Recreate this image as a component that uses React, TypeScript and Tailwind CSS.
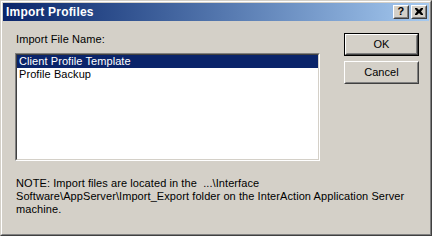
import React from "react";

const face = "bg-[#d4d0c8]";

function RaisedButton({
  children,
  isDefault,
}: {
  children: React.ReactNode;
  isDefault?: boolean;
}) {
  const inner = (
    <div className="flex-1 flex border border-t-white border-l-white border-r-[#404040] border-b-[#404040]">
      <div className="flex-1 flex items-center justify-center border border-t-[#d4d0c8] border-l-[#d4d0c8] border-r-[#808080] border-b-[#808080]">
        {children}
      </div>
    </div>
  );
  if (isDefault) {
    return <div className="w-[75px] h-[23px] flex border border-black">{inner}</div>;
  }
  return <div className="w-[75px] h-[23px] flex">{inner}</div>;
}

function CaptionButton({ children }: { children: React.ReactNode }) {
  return (
    <div className="w-[16px] h-[14px] flex border border-t-white border-l-white border-r-[#404040] border-b-[#404040] bg-[#d4d0c8]">
      <div className="flex-1 flex items-center justify-center border border-t-[#d4d0c8] border-l-[#d4d0c8] border-r-[#808080] border-b-[#808080]">
        {children}
      </div>
    </div>
  );
}

export default function App() {
  return (
    <div
      className={`w-[432px] h-[236px] ${face} border border-t-[#d4d0c8] border-l-[#d4d0c8] border-r-[#404040] border-b-[#404040] text-[11px] leading-[13px] tracking-[0.08px] text-black`}
      style={{ fontFamily: '"Liberation Sans", Arial, sans-serif' }}
    >
      <div className="h-full flex flex-col border border-t-white border-l-white border-r-[#808080] border-b-[#808080] p-px">
        {/* title bar */}
        <div className="h-[18px] flex items-center bg-gradient-to-r from-[#0a246a] to-[#a6caf0] pl-[3px] pr-[2px]">
          <span className="flex-1 font-bold text-white text-[12px] tracking-[0.2px] leading-[18px]">Import Profiles</span>
          <div className="flex gap-[2px]">
            <CaptionButton>
              <span className="font-bold text-[11px] leading-none -mt-px">?</span>
            </CaptionButton>
            <CaptionButton>
              <svg width="8" height="7" viewBox="0 0 8 7" className="-mt-px">
                <path d="M0 0h2l2 2 2-2h2v1L6 3.5 8 6v1H6L4 5 2 7H0V6l2-2.5L0 1z" fill="#000" />
              </svg>
            </CaptionButton>
          </div>
        </div>

        {/* body */}
        <div className="flex-1 flex flex-col pl-[12px] pr-[10px] pt-[12px]">
          <div className="flex">
            <div className="flex flex-col">
              <div className="ml-px">Import File Name:</div>
              <div className="mt-[7px] w-[305px] h-[108px] flex border border-t-[#808080] border-l-[#808080] border-r-white border-b-white">
                <div className="flex-1 bg-white border border-t-[#404040] border-l-[#404040] border-r-[#d4d0c8] border-b-[#d4d0c8]">
                  <div className="bg-[#0a246a] text-white pl-[2px]">Client Profile Template</div>
                  <div className="pl-[2px]">Profile Backup</div>
                </div>
              </div>
            </div>
            <div className="ml-auto flex flex-col gap-[5px]">
              <RaisedButton isDefault>OK</RaisedButton>
              <RaisedButton>Cancel</RaisedButton>
            </div>
          </div>
          <p className="mt-[16px] ml-px">
            NOTE: Import files are located in the&nbsp; ...\Interface
            <br />
            Software\AppServer\Import_Export folder on the InterAction Application Server
            <br />
            machine.
          </p>
        </div>
      </div>
    </div>
  );
}
